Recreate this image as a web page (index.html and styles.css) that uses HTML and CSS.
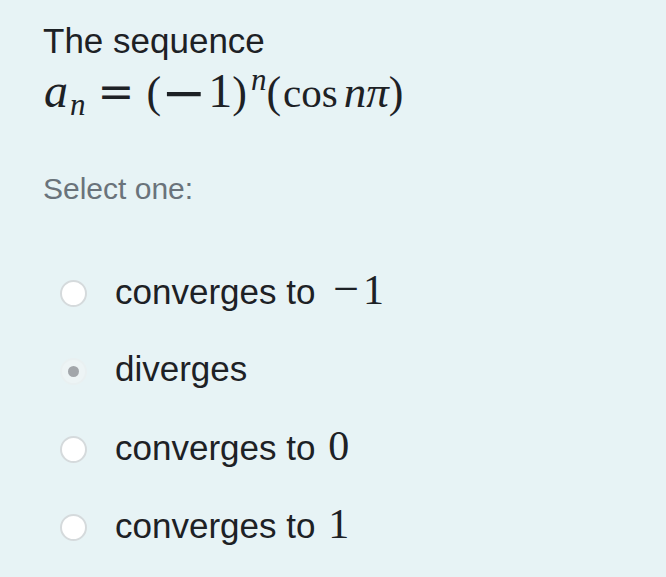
FILE: index.html
```html
<!DOCTYPE html>
<html>
<head>
<meta charset="utf-8">
<link rel="stylesheet" href="styles.css">
</head>
<body>
<div class="question">
  <div class="qtext">
    <div class="intro">The sequence</div>
    <div class="math"><span class="mi va">a</span><span class="sub mi">n</span><span class="op eq">=</span><span class="mo lp1">(</span><span class="op minus">−</span><span class="mn one">1</span><span class="mo rp1">)</span><span class="sup mi">n</span><span class="mo lp2">(</span><span class="fn">cos</span><span class="mi vn">n</span><span class="mi pi">π</span><span class="mo rp2">)</span></div>
  </div>
  <div class="prompt">Select one:</div>
  <div class="answers">
    <label class="option"><span class="radio"></span><span class="label">converges to <span class="m"><span class="neg">−</span>1</span></span></label>
    <label class="option"><span class="radio checked"></span><span class="label">diverges</span></label>
    <label class="option"><span class="radio"></span><span class="label">converges to <span class="m">0</span></span></label>
    <label class="option"><span class="radio"></span><span class="label">converges to <span class="m">1</span></span></label>
  </div>
</div>
</body>
</html>
```
FILE: styles.css
```css
html, body {
  margin: 0;
  padding: 0;
  background: #e7f3f5;
}
body {
  width: 666px;
  height: 577px;
  overflow: hidden;
  font-family: "Liberation Sans", Arial, sans-serif;
  color: #1d2125;
}
.question {
  padding: 20px 0 0 43px;
}
.intro {
  font-size: 35px;
  line-height: 42px;
}
.math {
  font-family: "Liberation Serif", "Times New Roman", serif;
  font-size: 44px;
  line-height: 58px;
  height: 58px;
  white-space: nowrap;
}
.mi {
  font-style: italic;
}
.va {
  font-size: 48px;
  margin-left: 1px;
}
.sub {
  font-size: 31px;
  line-height: 0;
  vertical-align: -8px;
  margin-left: 2px;
}
.sup {
  font-size: 31px;
  line-height: 0;
  vertical-align: 17px;
  margin-left: 4px;
}
.op {
  font-family: "DejaVu Serif", serif;
  font-size: 44px;
}
.eq {
  margin: 0 12px 0 12px;
}
.lp1 {
  margin-right: 0;
}
.minus {
  font-size: 54px;
  line-height: 0;
  vertical-align: -4px;
  margin-right: 2px;
}
.one {
  font-size: 48px;
}
.rp1 {
  margin-left: 0;
}
.lp2 {
  margin-left: 0;
  margin-right: 2px;
}
.fn {
  font-size: 41px;
  margin-right: 6px;
}
.vn {
  font-size: 45px;
}
.pi {
  font-size: 45px;
  margin-right: 0;
}
.prompt {
  margin-top: 51px;
  font-size: 30px;
  line-height: 36px;
  color: #6a737b;
}
.answers {
  margin-top: 45px;
  display: flex;
  flex-direction: column;
}
.option {
  display: flex;
  align-items: center;
  height: 78px;
  font-size: 35px;
  line-height: 78px;
}
.radio {
  box-sizing: border-box;
  width: 27px;
  height: 27px;
  margin: 4px 0 0 17px;
  border-radius: 50%;
  background: #ffffff;
  border: 2px solid #d5dadc;
  display: flex;
  align-items: center;
  justify-content: center;
  flex: none;
}
.radio.checked {
  background: #edf4f5;
  border-color: #e9f0f1;
}
.radio.checked::after {
  content: "";
  width: 11px;
  height: 11px;
  border-radius: 50%;
  background: #a2a6aa;
}
.label {
  margin-left: 28px;
}
.m {
  font-family: "Liberation Serif", "Times New Roman", serif;
  font-size: 42px;
  margin-left: 3px;
}
.neg {
  font-size: 46px;
  line-height: 0;
  margin-left: 5px;
  margin-right: 4px;
}
```
